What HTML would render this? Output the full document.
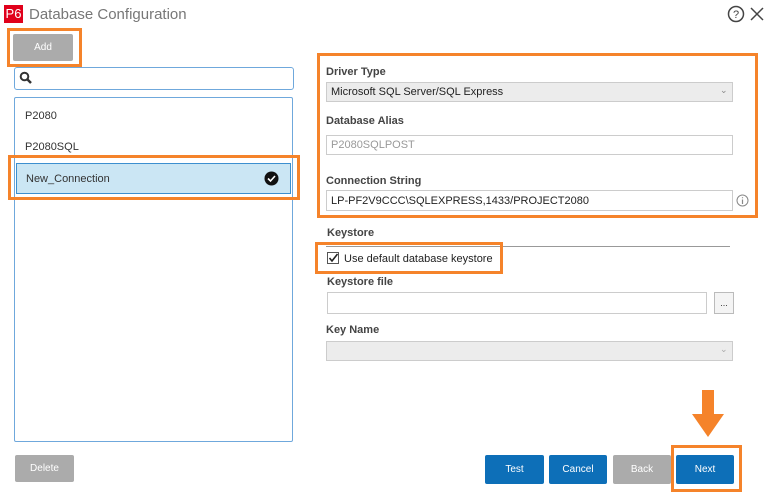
<!DOCTYPE html>
<html><head><style>
*{box-sizing:border-box;margin:0;padding:0}
body{width:768px;height:495px;background:#fff;font-family:"Liberation Sans",sans-serif;position:relative;overflow:hidden;color:#333}
.a{position:absolute}
.or{position:absolute;border:3px solid #f5832a}
.lbl{position:absolute;font-size:11px;font-weight:bold;color:#444}
.inp{position:absolute;border:1px solid #ccc;background:#fff;font-size:11px;padding-left:4px;display:flex;align-items:center}
.btn{position:absolute;background:#0d6fb8;color:#fff;font-size:10px;display:flex;align-items:center;justify-content:center;border-radius:2px}
.gb{background:#ababab}
</style></head><body>
<div class="a" style="left:4px;top:5px;width:19px;height:18px;background:#e0001b;color:#fff;font-size:13px;line-height:18px;text-align:center">P6</div>
<div class="a" style="left:29px;top:6px;font-size:15px;color:#777">Database Configuration</div>
<svg class="a" style="left:727px;top:5px" width="40" height="20"><circle cx="9" cy="9" r="7.5" fill="none" stroke="#444" stroke-width="1.5"/><text x="9" y="13" font-size="11" text-anchor="middle" fill="#444" font-family="Liberation Sans">?</text><path d="M24 3L36 15M36 3L24 15" stroke="#444" stroke-width="1.5"/></svg>

<div class="or" style="left:7px;top:28px;width:75px;height:39px"></div>
<div class="btn gb" style="left:13px;top:34px;width:60px;height:27px">Add</div>
<div class="a" style="left:14px;top:67px;width:280px;height:23px;border:1.5px solid #6fa8dc;border-radius:3px"></div>
<svg class="a" style="left:19px;top:71px" width="14" height="14"><circle cx="5.5" cy="5.5" r="3.8" fill="none" stroke="#333" stroke-width="2"/><path d="M8.5 8.5L12 12" stroke="#333" stroke-width="2.5"/></svg>
<div class="a" style="left:14px;top:97px;width:279px;height:345px;border:1.5px solid #6fa8dc;border-radius:2px"></div>
<div class="a" style="left:25px;top:110px;font-size:11px">P2080</div>
<div class="a" style="left:25px;top:141px;font-size:11px">P2080SQL</div>
<div class="a" style="left:16px;top:163px;width:275px;height:31px;background:#cbe6f4;border:1px solid #3c8fcf"></div>
<div class="a" style="left:26px;top:173px;font-size:11px">New_Connection</div>
<svg class="a" style="left:264px;top:171px" width="15" height="15"><circle cx="7.5" cy="7.5" r="7" fill="#111"/><path d="M4 7.5L6.5 10L11 5" stroke="#fff" stroke-width="1.6" fill="none"/></svg>
<div class="or" style="left:8px;top:155px;width:292px;height:45px"></div>

<div class="or" style="left:317px;top:53px;width:441px;height:165px"></div>
<div class="lbl" style="left:326px;top:66px">Driver Type</div>
<div class="inp" style="left:326px;top:82px;width:407px;height:20px;background:#ececec;color:#222">Microsoft SQL Server/SQL Express</div>
<div class="a" style="left:720px;top:85px;font-size:9px;color:#888">⌄</div>
<div class="lbl" style="left:326px;top:115px">Database Alias</div>
<div class="inp" style="left:326px;top:135px;width:407px;height:20px;color:#999">P2080SQLPOST</div>
<div class="lbl" style="left:326px;top:175px">Connection String</div>
<div class="inp" style="left:326px;top:190px;width:407px;height:21px;color:#222">LP-PF2V9CCC\SQLEXPRESS,1433/PROJECT2080</div>
<svg class="a" style="left:736px;top:194px" width="13" height="13"><circle cx="6.5" cy="6.5" r="5.5" fill="none" stroke="#888"/><path d="M6.5 5.5V10M6.5 3.3V4.3" stroke="#888" stroke-width="1.2"/></svg>
<div class="lbl" style="left:327px;top:227px">Keystore</div>
<div class="a" style="left:326px;top:246px;width:404px;height:1px;background:#999"></div>
<div class="or" style="left:315px;top:242px;width:188px;height:32px"></div>
<div class="a" style="left:327px;top:252px;width:12px;height:12px;border:1px solid #555;background:#fff"></div>
<svg class="a" style="left:327px;top:251px" width="13" height="13"><path d="M2.5 7L5 10L10.5 3" stroke="#222" stroke-width="1.6" fill="none"/></svg>
<div class="a" style="left:344px;top:253px;font-size:11px;color:#222">Use default database keystore</div>
<div class="lbl" style="left:327px;top:276px">Keystore file</div>
<div class="inp" style="left:327px;top:292px;width:380px;height:22px"></div>
<div class="a" style="left:714px;top:292px;width:20px;height:22px;border:1px solid #bbb;background:#f4f4f4;font-size:9px;text-align:center;line-height:20px">...</div>
<div class="lbl" style="left:326px;top:324px">Key Name</div>
<div class="inp" style="left:326px;top:341px;width:407px;height:20px;background:#ececec"></div>
<div class="a" style="left:720px;top:344px;font-size:9px;color:#aaa">⌄</div>

<div class="btn gb" style="left:15px;top:455px;width:59px;height:27px">Delete</div>
<div class="btn" style="left:485px;top:455px;width:59px;height:29px">Test</div>
<div class="btn" style="left:549px;top:455px;width:58px;height:29px">Cancel</div>
<div class="btn gb" style="left:613px;top:455px;width:58px;height:29px">Back</div>
<div class="btn" style="left:676px;top:455px;width:58px;height:29px">Next</div>
<div class="or" style="left:671px;top:445px;width:71px;height:47px"></div>
<svg class="a" style="left:690px;top:390px" width="36" height="48"><path d="M12 0H24V24H34L18 47L2 24H12Z" fill="#f5832a"/></svg>
</body></html>
